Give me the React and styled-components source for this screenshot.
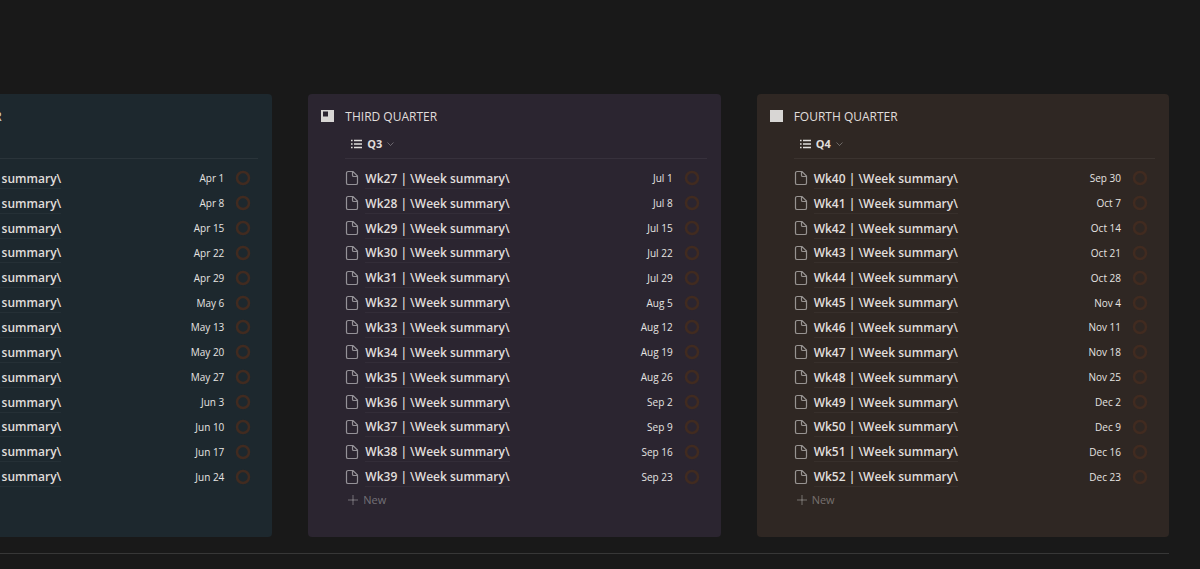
import React from "react";
import styled, { createGlobalStyle } from "styled-components";

const GlobalStyle = createGlobalStyle`
  *, *::before, *::after { box-sizing: border-box; }
  body {
    margin: 0;
    background: #191919;
    color: #e0dedc;
    font-family: "Segoe UI", "Open Sans", "Noto Sans", sans-serif;
    overflow: hidden;
  }
`;

const Page = styled.main`
  overflow: hidden;
  padding: 94px 31px 16px 0;
`;

const Board = styled.div`
  display: grid;
  grid-template-columns: repeat(3, 1fr);
  gap: 36px;
  margin-left: -140px;
`;

const Card = styled.section`
  background: ${(p) => p.$tint};
  border-radius: 4px;
  padding: 12px 14px 27px 37px;
`;

const CardHeader = styled.header`
  display: flex;
  align-items: center;
  gap: 10px;
  height: 20px;
  margin-left: -24px;
`;

const CardTitle = styled.h2`
  margin: 0;
  font-size: 12px;
  line-height: 20px;
  padding-top: 2px;
  font-weight: 400;
  white-space: nowrap;
`;

const ViewBar = styled.div`
  display: flex;
  align-items: center;
  height: 33px;
  padding: 3px 0 0 5px;
  border-bottom: 1px solid rgba(255, 255, 255, 0.06);
`;

const ViewButton = styled.button`
  display: flex;
  align-items: center;
  gap: 4px;
  height: 20px;
  padding: 0;
  border: 0;
  background: none;
  color: inherit;
  font: 700 11px/20px "Segoe UI", "Open Sans", "Noto Sans", sans-serif;
  cursor: pointer;
`;

const Weeks = styled.ul`
  display: grid;
  grid-auto-rows: 1fr;
  min-height: 323px;
  margin: 7px 0 0;
  padding: 0;
  list-style: none;
`;

const Week = styled.li`
  display: flex;
  align-items: center;
  padding-right: 7px;
`;

const WeekLink = styled.a`
  display: flex;
  align-items: center;
  gap: 6px;
  color: inherit;
  text-decoration: none;
  font-size: 12px;
  line-height: 18px;
  font-weight: 600;
  white-space: nowrap;
`;

const WeekName = styled.span`
  padding-top: 2px;
  border-bottom: 1px solid rgba(255, 255, 255, 0.04);
`;

const WeekDate = styled.time`
  margin: 0 11px 0 auto;
  color: #e6e4e2;
  font-size: 10px;
  line-height: 18px;
  white-space: nowrap;
`;

const NewButton = styled.button`
  display: flex;
  align-items: center;
  gap: 5px;
  height: 20px;
  margin-top: 1px;
  padding: 0 0 0 3px;
  border: 0;
  background: none;
  color: rgba(255, 255, 255, 0.35);
  font: 400 11px/20px "Segoe UI", "Open Sans", "Noto Sans", sans-serif;
  cursor: pointer;
`;

const Divider = styled.hr`
  height: 1px;
  margin: 16px 0 0;
  border: 0;
  background: #373737;
`;

const QuarterIcon = ({ notch }) => (
  <svg width="14" height="14" viewBox="0 0 14 14" aria-hidden="true">
    <path d="M0 1h13v12H0z" fill="#d8d6d4" />
    {notch && <path d="M2 2.500h5v5H2z" fill="#2b2530" />}
  </svg>
);

const ListIcon = () => (
  <svg width="13" height="12" viewBox="0 0 13 12" aria-hidden="true">
    <path
      d="M1 2.500h1.600M1 6h1.600M1 9.500h1.600M4 2.500h8M4 6h8M4 9.500h8"
      stroke="currentColor"
      strokeWidth="1.300"
    />
  </svg>
);

const Chevron = () => (
  <svg width="9" height="8" viewBox="0 0 9 8" aria-hidden="true">
    <path d="M1.500 2.500l3 3 3-3" fill="none" stroke="#fff" strokeOpacity="0.3" />
  </svg>
);

const PageIcon = () => (
  <svg width="14" height="16" viewBox="0 0 14 16" aria-hidden="true">
    <path
      d="M3.100 1.500H8l4.500 4.500v6.900a1.600 1.600 0 0 1-1.600 1.600H3.100A1.600 1.600 0 0 1 1.500 12.900V3.100a1.600 1.600 0 0 1 1.600-1.600zM7.500 1.700v3.500a1.300 1.300 0 0 0 1.300 1.300h3.500"
      fill="none"
      stroke="#fff"
      strokeOpacity="0.5"
      strokeWidth="1.200"
    />
  </svg>
);

const Ring = () => (
  <svg width="16" height="16" viewBox="0 0 16 16" role="img" aria-label="Progress">
    <circle cx="8" cy="8" r="6" fill="none" stroke="#412b20" strokeWidth="2.500" />
  </svg>
);

const Plus = () => (
  <svg width="10" height="10" viewBox="0 0 10 10" aria-hidden="true">
    <path d="M5 0v10M0 5h10" stroke="currentColor" />
  </svg>
);

const quarters = [
  {
    title: "SECOND QUARTER",
    tint: "#1d282e",
    firstWeek: 14,
    notch: true,
    dates: ["Apr 1", "Apr 8", "Apr 15", "Apr 22", "Apr 29", "May 6", "May 13", "May 20", "May 27", "Jun 3", "Jun 10", "Jun 17", "Jun 24"],
    view: "Q2",
  },
  {
    title: "THIRD QUARTER",
    tint: "#2b2530",
    firstWeek: 27,
    notch: true,
    dates: ["Jul 1", "Jul 8", "Jul 15", "Jul 22", "Jul 29", "Aug 5", "Aug 12", "Aug 19", "Aug 26", "Sep 2", "Sep 9", "Sep 16", "Sep 23"],
    view: "Q3",
  },
  {
    title: "FOURTH QUARTER",
    tint: "#2f2723",
    firstWeek: 40,
    notch: false,
    dates: ["Sep 30", "Oct 7", "Oct 14", "Oct 21", "Oct 28", "Nov 4", "Nov 11", "Nov 18", "Nov 25", "Dec 2", "Dec 9", "Dec 16", "Dec 23"],
    view: "Q4",
  },
];

const Quarter = ({ title, tint, firstWeek, notch, dates, view }) => (
  <Card $tint={tint}>
    <CardHeader>
      <QuarterIcon notch={notch} />
      <CardTitle>{title}</CardTitle>
    </CardHeader>
    <ViewBar>
      <ViewButton type="button">
        <ListIcon />
        {view}
        <Chevron />
      </ViewButton>
    </ViewBar>
    <Weeks>
      {dates.map((date, i) => (
        <Week key={date}>
          <WeekLink href={`#wk${firstWeek + i}`}>
            <PageIcon />
            <WeekName>{`Wk${firstWeek + i} | \\Week summary\\`}</WeekName>
          </WeekLink>
          <WeekDate>{date}</WeekDate>
          <Ring />
        </Week>
      ))}
    </Weeks>
    <NewButton type="button">
      <Plus />
      New
    </NewButton>
  </Card>
);

export default function App() {
  return (
    <>
      <GlobalStyle />
      <Page>
        <Board>
          {quarters.map((q) => (
            <Quarter key={q.view} {...q} />
          ))}
        </Board>
        <Divider />
      </Page>
    </>
  );
}
